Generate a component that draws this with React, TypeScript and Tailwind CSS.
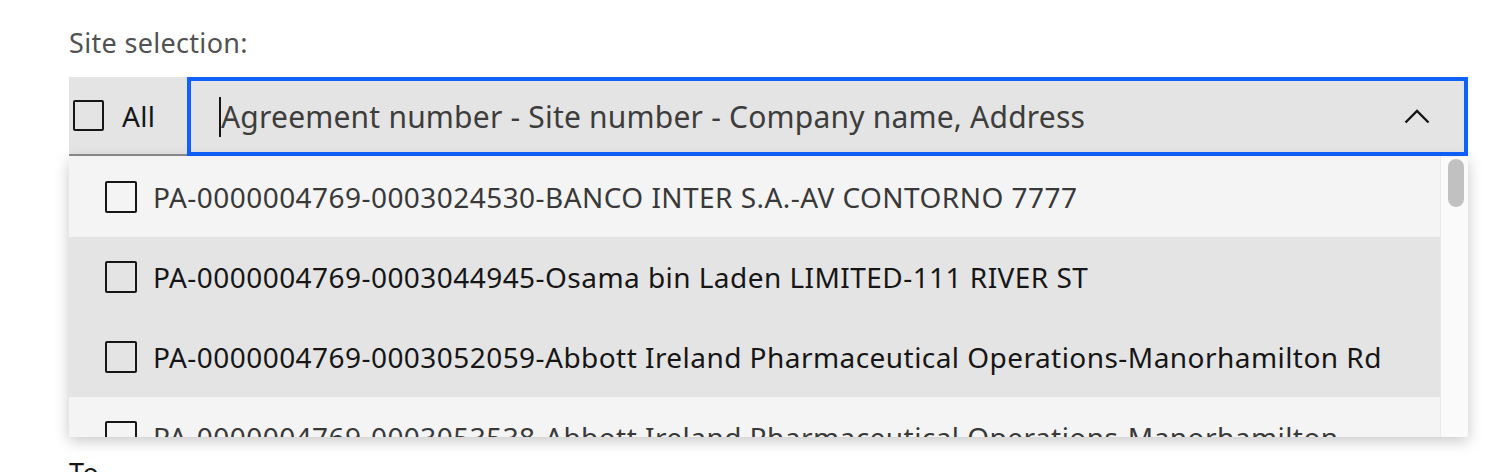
const sites = [
  "PA-0000004769-0003024530-BANCO INTER S.A.-AV CONTORNO 7777",
  "PA-0000004769-0003044945-Osama bin Laden LIMITED-111 RIVER ST",
  "PA-0000004769-0003052059-Abbott Ireland Pharmaceutical Operations-Manorhamilton Rd",
  "PA-0000004769-0003053538-Abbott Ireland Pharmaceutical Operations-Manorhamilton",
];

const hovered = [false, true, true, false];

function Box() {
  return <span className="block w-[32px] h-[32px] shrink-0 border-2 border-[#161616] rounded-[2px]" />;
}

export default function App() {
  return (
    <div className="w-full h-[472px] overflow-hidden bg-white pl-[69px] pr-[20px] pt-[26px] font-['Noto_Sans',sans-serif] tracking-[0.32px]">
      <label className="block text-[27px] leading-[34px] text-[#525252]">Site selection:</label>

      <div className="relative mt-[17px] w-[1399px]">
        <div className="flex h-[79px]">
          <div className="flex items-center w-[118px] shrink-0 bg-[#e4e4e4] border-b-2 border-[#8d8d8d] pl-[4px] gap-[18px]">
            <span className="block w-[31px] h-[31px] border-2 border-[#161616] rounded-[2px]" />
            <span className="text-[28px] text-[#161616]">All</span>
          </div>
          <div className="flex flex-1 items-center bg-[#e4e4e4] border-4 border-[#0f62fe] pl-[28px] pr-[34px]">
            <span className="w-[2px] h-[40px] bg-[#161616]" />
            <span className="flex-1 text-[30px] text-[#3d3d3d] leading-none tracking-[0.2px]">
              Agreement number - Site number - Company name, Address
            </span>
            <svg width="26" height="15" viewBox="0 0 26 15" fill="none" className="text-[#161616]">
              <polyline points="1.5,13.5 13,2 24.5,13.5" stroke="currentColor" strokeWidth="2.4" />
            </svg>
          </div>
        </div>

        <div className="absolute z-10 left-0 right-0 top-[80px] h-[280px] flex bg-[#f4f4f4] shadow-[0_4px_14px_rgba(0,0,0,0.22)] overflow-hidden">
          <ul className="flex-1">
            {sites.map((s, i) => (
              <li
                key={s}
                className={
                  hovered[i]
                    ? "flex items-center h-[80px] pl-[36px] gap-[16px] bg-[#e4e4e4] text-[#161616]"
                    : "flex items-center h-[80px] pl-[36px] gap-[16px] bg-[#f4f4f4] text-[#393939]"
                }
              >
                <Box />
                <span className="text-[28px] whitespace-nowrap tracking-[0.45px]">{s}</span>
              </li>
            ))}
          </ul>
          <div className="w-[28px] shrink-0 bg-[#fafafa] border-l border-[#ebebeb] pt-[2px] pl-[7px]">
            <div className="w-[16px] h-[48px] rounded-full bg-[#c1c1c1]" />
          </div>
        </div>
      </div>

      <label className="block mt-[300px] text-[27px] leading-[34px] text-[#161616]">To</label>
    </div>
  );
}
